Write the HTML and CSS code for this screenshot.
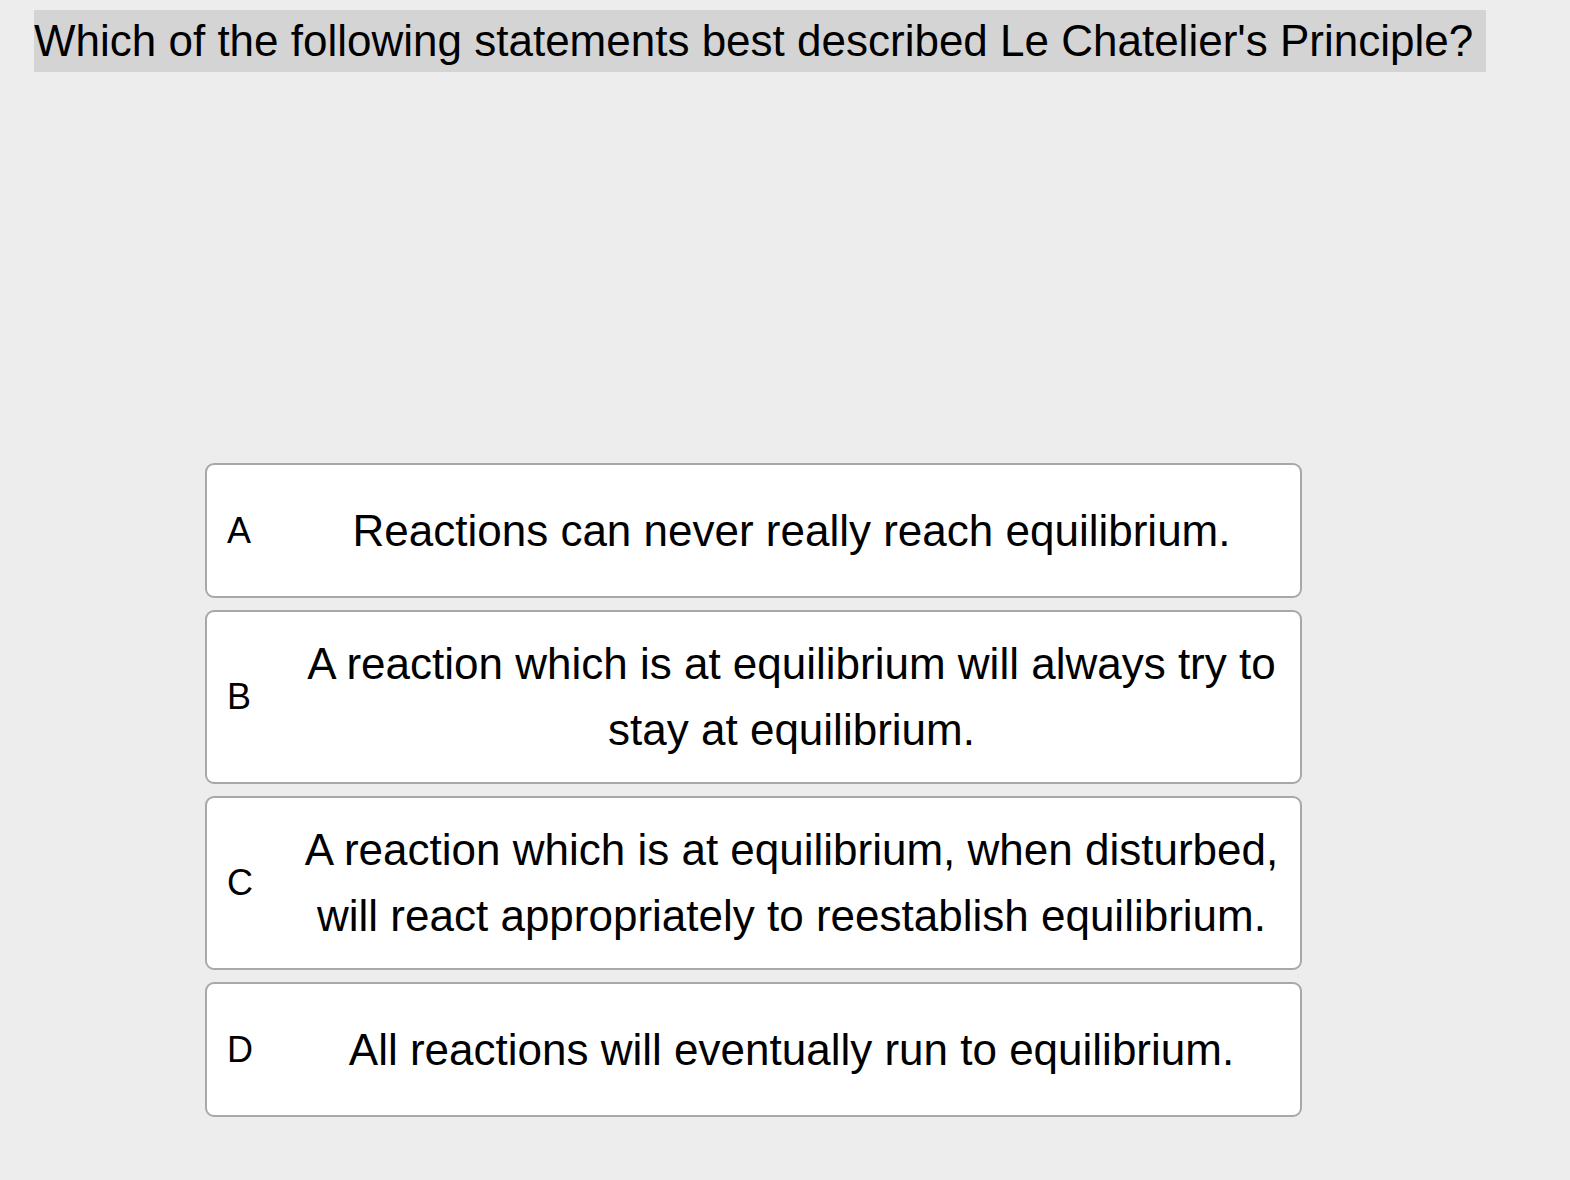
FILE: index.html
```html
<!DOCTYPE html>
<html>
<head>
<meta charset="utf-8">
<link rel="stylesheet" href="styles.css">
</head>
<body>
<div class="page">
  <div class="question"><span class="question-text">Which of the following statements best described Le Chatelier's Principle?</span></div>
  <div class="options">
    <div class="option">
      <div class="label">A</div>
      <div class="text">Reactions can never really reach equilibrium.</div>
    </div>
    <div class="option">
      <div class="label">B</div>
      <div class="text">A reaction which is at equilibrium will always try to stay at equilibrium.</div>
    </div>
    <div class="option">
      <div class="label">C</div>
      <div class="text">A reaction which is at equilibrium, when disturbed, will react appropriately to reestablish equilibrium.</div>
    </div>
    <div class="option">
      <div class="label">D</div>
      <div class="text">All reactions will eventually run to equilibrium.</div>
    </div>
  </div>
</div>
</body>
</html>
```

FILE: styles.css
```css
html, body {
  margin: 0;
  padding: 0;
  background: #ededed;
}
body {
  font-family: "Liberation Sans", Arial, sans-serif;
  color: #000;
  width: 1570px;
  height: 1180px;
  overflow: hidden;
}
.page {
  padding-top: 10px;
}
.question {
  margin-left: 34px;
  width: 1452px;
  height: 62px;
  background: #d4d4d4;
  display: flex;
  align-items: center;
}
.question-text {
  font-size: 44px;
  line-height: 62px;
  white-space: nowrap;
}
.options {
  margin-top: 391px;
  margin-left: 205px;
  width: 1097px;
  display: flex;
  flex-direction: column;
  gap: 12px;
}
.option {
  box-sizing: border-box;
  min-height: 135px;
  background: #fff;
  border: 2px solid #a6a8aa;
  border-radius: 9px;
  display: flex;
  align-items: center;
  padding: 19px 4px 19px 20px;
}
.label {
  width: 60px;
  flex: none;
  font-size: 36px;
}
.text {
  flex: 1;
  text-align: center;
  font-size: 44px;
  line-height: 66px;
}
```
